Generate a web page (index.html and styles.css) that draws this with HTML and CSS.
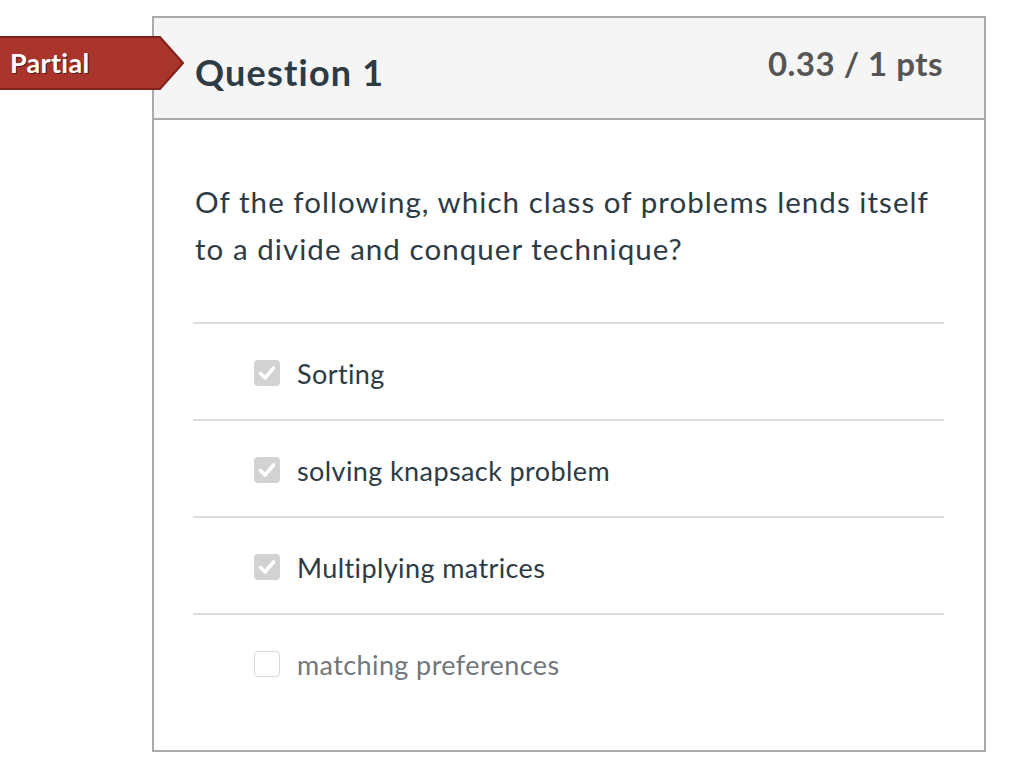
FILE: index.html
```html
<!DOCTYPE html>
<html>
<head>
<meta charset="utf-8">
<link rel="stylesheet" href="styles.css">
</head>
<body>
<div class="page">
  <div class="card">
    <div class="card-header">
      <h2 class="q-title">Question 1</h2>
      <div class="q-points">0.33 / 1 pts</div>
    </div>
    <div class="card-body">
      <p class="q-text">Of the following, which class of problems lends itself to a divide and conquer technique?</p>
      <div class="answers">
        <div class="answer">
          <span class="box checked"><svg viewBox="0 0 26 26" width="26" height="26"><path d="M6.5 13.5 L11 18 L19.5 8" fill="none" stroke="#fff" stroke-width="3.6" stroke-linecap="round" stroke-linejoin="round"/></svg></span>
          <span class="label">Sorting</span>
        </div>
        <div class="answer">
          <span class="box checked"><svg viewBox="0 0 26 26" width="26" height="26"><path d="M6.5 13.5 L11 18 L19.5 8" fill="none" stroke="#fff" stroke-width="3.6" stroke-linecap="round" stroke-linejoin="round"/></svg></span>
          <span class="label">solving knapsack problem</span>
        </div>
        <div class="answer">
          <span class="box checked"><svg viewBox="0 0 26 26" width="26" height="26"><path d="M6.5 13.5 L11 18 L19.5 8" fill="none" stroke="#fff" stroke-width="3.6" stroke-linecap="round" stroke-linejoin="round"/></svg></span>
          <span class="label">Multiplying matrices</span>
        </div>
        <div class="answer">
          <span class="box"></span>
          <span class="label muted">matching preferences</span>
        </div>
      </div>
    </div>
  </div>
  <div class="flag">
    <svg class="flag-shape" viewBox="0 0 184 54" width="184" height="54"><polygon points="-2,1 160,1 183,27 160,53 -2,53" fill="#a8342b" stroke="#7e231c" stroke-width="2"/></svg>
    <span class="flag-text">Partial</span>
  </div>
</div>
</body>
</html>
```
FILE: styles.css
```css
html, body {
  margin: 0;
  padding: 0;
  background: #fff;
}
body {
  font-family: Lato, "Open Sans", "Liberation Sans", sans-serif;
  color: #2d3b45;
}
.page {
  position: relative;
  width: 1010px;
  height: 782px;
  padding-top: 16px;
  box-sizing: border-box;
}
.card {
  margin-left: 152px;
  width: 834px;
  height: 736px;
  box-sizing: border-box;
  border: 2px solid #aaaaaa;
  display: flex;
  flex-direction: column;
}
.card-header {
  height: 102px;
  box-sizing: border-box;
  background: #f5f5f5;
  border-bottom: 2px solid #aaaaaa;
  padding: 0 41px;
  display: flex;
  justify-content: space-between;
  align-items: flex-start;
}
.q-title {
  margin: 34px 0 0;
  font-size: 36px;
  font-weight: 700;
  line-height: 40px;
  letter-spacing: 1.2px;
  color: #2d3b45;
}
.q-points {
  margin-top: 25px;
  font-size: 33px;
  font-weight: 700;
  line-height: 40px;
  letter-spacing: 0.5px;
  color: #555555;
}
.card-body {
  padding: 58px 41px 0 39px;
}
.q-text {
  margin: 0 0 50px 2px;
  font-size: 29.5px;
  line-height: 47px;
  letter-spacing: 1.05px;
  color: #2d3b45;
}
.answers {
  width: 751px;
}
.answer {
  height: 97px;
  box-sizing: border-box;
  border-top: 2px solid #dddddd;
  display: flex;
  align-items: center;
  padding-left: 61px;
  padding-top: 3px;
}
.box {
  width: 26px;
  height: 26px;
  box-sizing: border-box;
  border-radius: 4px;
  border: 1.5px solid #d8d8d8;
  background: #fff;
  margin-right: 17px;
  display: flex;
  align-items: center;
  justify-content: center;
  flex: none;
}
.box.checked {
  background: #d2d2d2;
  border: none;
}
.label {
  font-size: 27px;
  letter-spacing: 0.4px;
  color: #2d3b45;
}
.label.muted {
  color: #73777b;
}
.flag {
  position: absolute;
  left: 0;
  top: 36px;
  width: 184px;
  height: 54px;
}
.flag-shape {
  position: absolute;
  left: 0;
  top: 0;
}
.flag-text {
  position: absolute;
  left: 10px;
  top: 12px;
  font-size: 27px;
  font-weight: 700;
  line-height: 30px;
  letter-spacing: 0.3px;
  color: #fff;
  text-shadow: 1px 1px 0 #5a1a14;
}
```
